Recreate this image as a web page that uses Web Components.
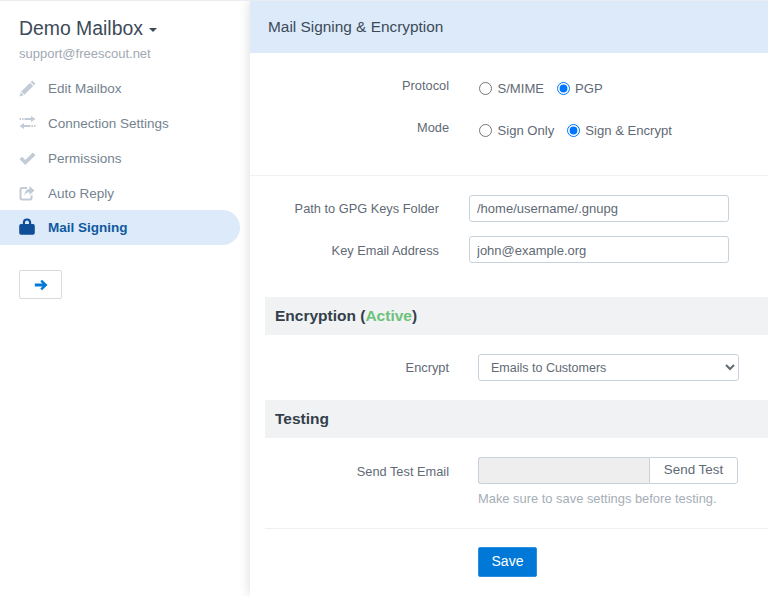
<!DOCTYPE html>
<html><head><meta charset="utf-8">
<style>
html,body{margin:0;padding:0;background:#fff}
body{width:768px;height:596px;overflow:hidden;font-family:"Liberation Sans",Arial,sans-serif;font-size:13px;color:#5f6a75}
</style></head><body>
<template id="t-shell"><style>
:host{display:flex;width:768px;height:596px;box-sizing:border-box;border-top:1px solid #eaecef;overflow:hidden}
::slotted([slot=side]){flex:0 0 250px}
::slotted([slot=main]){flex:1 1 auto;min-width:0}
</style><slot name="side"></slot><slot name="main"></slot></template>

<template id="t-side"><style>
:host{display:block;box-sizing:border-box;padding-top:14px}
.title{margin-left:19px;font-size:19.4px;line-height:26px;color:#3c4a58;display:flex;align-items:center;gap:6px}
.caret{width:0;height:0;border:4px solid transparent;border-top-color:#3c4a58;border-bottom:0;margin-top:3px}
.mail{margin:4px 0 0 19px;line-height:17px;font-size:13px;color:#a1a9b3}
nav{margin-top:9px;width:240px;display:flex;flex-direction:column}
.btn{margin:25px 0 0 19px;box-sizing:border-box;width:43px;height:29px;border:1px solid #d6dbe0;border-radius:2px;display:flex;align-items:center;justify-content:center;background:#fff}
</style>
<div class="title"><span>Demo Mailbox</span><i class="caret"></i></div>
<div class="mail">support@freescout.net</div>
<nav><slot></slot></nav>
<div class="btn"><svg width="14" height="12" viewBox="0 0 14 12"><path d="M8 .8 13.500 6 8 11.200 6.300 9.500 8.500 7.500H.8V4.500H8.500L6.300 2.500Z" fill="#0078d7"/></svg></div>
</template>

<template id="t-item"><style>
:host{display:flex;align-items:center;height:35px;box-sizing:border-box;padding-left:19px;border-radius:0 18px 18px 0;color:#75838f;font-size:13.5px}
:host([active]){background:#dceafa;color:#10599f;font-weight:700;margin-top:-1px}
.ic{flex:0 0 29px;display:flex;align-items:center}
::slotted(svg){display:block}
</style><span class="ic"><slot name="icon"></slot></span><span><slot></slot></span></template>

<template id="t-head"><style>
:host{display:flex;align-items:center;height:52px;background:#dceafa;padding-left:18px;font-size:15.4px;color:#3c4a58;box-sizing:border-box}
</style><slot></slot></template>

<template id="t-row"><style>
:host{display:flex;align-items:center}
.l{flex:0 0 var(--lw,199px);box-sizing:border-box;text-align:right;color:#5f6a75;font-size:12.8px;transform:translateY(var(--ly,0))}
.c{margin-left:var(--gap,30px);display:flex;align-items:center;flex:1 1 auto;min-width:0}
</style><div class="l"><slot name="label"></slot></div><div class="c"><slot></slot></div></template>

<template id="t-radio"><style>
:host{display:inline-flex;align-items:center;color:#5f6a75;margin-right:12.500px;font-size:13.1px}
input{margin:0 5.5px 0 0;width:13px;height:13px;flex:none}
</style><input type="radio"><slot></slot></template>

<template id="t-section"><style>
:host{display:flex;align-items:center;height:38px;background:#f1f2f4;padding-left:10px;font-size:15.5px;font-weight:700;color:#333f4b;box-sizing:border-box;margin-left:15px;white-space:pre}
</style><slot></slot></template>

<template id="t-main"><style>
:host{display:block;height:595px;background:#fff;box-shadow:0 0 11px rgba(60,70,80,.2);position:relative}
hr{border:0;border-top:1px solid #eef0f2;margin:0}
.radios{display:flex;flex-direction:column;padding-top:26px;height:122px;box-sizing:border-box}
.radios form-row{--lw:199px;--gap:30px;--ly:-3px;height:18px}
.radios form-row+form-row{margin-top:24px}
.paths{padding-top:19px;height:121px;box-sizing:border-box}
.paths form-row{--lw:189px;--gap:30px;height:27px}
.paths form-row+form-row{margin-top:14px;--ly:1px}
.paths form-row+form-row .txt{padding-top:2px}
.txt{width:260px;height:27px;box-sizing:border-box;border:1px solid #c8d2dc;border-radius:3px;padding:0 7px;font:13px "Liberation Sans",Arial,sans-serif;color:#5f6a75;background:#fff;outline:0}
.sel{width:261px;height:27px;box-sizing:border-box;border:1px solid #c8d2dc;border-radius:3px;padding:0 8px;font:12.5px "Liberation Sans",Arial,sans-serif;color:#5f6a75;background:#fff;outline:0}
.enc{height:65px;padding-top:19px;box-sizing:border-box}
.enc form-row,.test form-row{--lw:199px;--gap:29px}
.test{padding-top:19px;height:90px;box-sizing:border-box}
.test form-row{--ly:1px}
.grp{display:flex;width:260px;height:27px}
.grp i{flex:1;box-sizing:border-box;background:#eeeeee;border:1px solid #c8d2dc;border-right:0;border-radius:3px 0 0 3px}
.grp button{flex:0 0 89px;box-sizing:border-box;background:#fff;border:1px solid #c8d2dc;border-radius:0 3px 3px 0;font:13.4px "Liberation Sans",Arial,sans-serif;color:#5f6a75;padding:0 0 2px}
.hint{margin:7px 0 0 228px;line-height:15px;color:#a6aeb7;font-size:12.9px}
.line{margin-left:15px}
.act{padding:18px 0 0 228px}
.save{width:59px;height:30px;box-sizing:border-box;background:#0078d7;border:1px solid #2a8fe0;border-radius:2px;color:#fff;font:14px "Liberation Sans",Arial,sans-serif;padding:0 0 2px}
.on{color:#6cc27a}
</style>
<main-head>Mail Signing &amp; Encryption</main-head>
<div class="radios">
<form-row><span slot="label">Protocol</span><radio-opt>S/MIME</radio-opt><radio-opt checked>PGP</radio-opt></form-row>
<form-row><span slot="label">Mode</span><radio-opt>Sign Only</radio-opt><radio-opt checked>Sign &amp; Encrypt</radio-opt></form-row>
</div>
<hr>
<div class="paths">
<form-row><span slot="label">Path to GPG Keys Folder</span><input class="txt" value="/home/username/.gnupg"></form-row>
<form-row><span slot="label">Key Email Address</span><input class="txt" value="john@example.org"></form-row>
</div>
<section-head>Encryption (<span class="on">Active</span>)</section-head>
<div class="enc">
<form-row><span slot="label">Encrypt</span><select class="sel"><option>Emails to Customers</option></select></form-row>
</div>
<section-head>Testing</section-head>
<div class="test">
<form-row><span slot="label">Send Test Email</span><div class="grp"><i></i><button>Send Test</button></div></form-row>
<div class="hint">Make sure to save settings before testing.</div>
</div>
<hr class="line">
<div class="act"><button class="save">Save</button></div>
</template>

<app-shell>
<side-bar slot="side">
<nav-item><svg slot="icon" width="17" height="17" viewBox="0 0 17 17"><path d="M13.300.500 16.500 3.700 14.900 5.300 11.700 2.100ZM11 2.800 14.200 6 5.400 14.800 2.200 11.600ZM1.700 12.300 4.700 15.300.500 16.500Z" fill="#c2ccd6"/></svg>Edit Mailbox</nav-item>
<nav-item><svg slot="icon" width="17" height="13" viewBox="0 0 17 13" style="margin-top:-2px"><path d="M12 0 16.500 3 12 6V4H5.500V2H12ZM.5 2H2V4H.5ZM3 2H4.500V4H3ZM5 7V9H11.500V11H5V13L.5 10ZM15 9H16.500V11H15ZM12.500 9H14V11H12.500Z" fill="#c2ccd6"/></svg>Connection Settings</nav-item>
<nav-item><svg slot="icon" width="17" height="13" viewBox="0 0 17 13"><path d="M.5 7.300 3 4.800 6.300 8 13.800.5 16.500 3.200 6.300 13 .5 7.300Z" fill="#c2ccd6"/></svg>Permissions</nav-item>
<nav-item><svg slot="icon" width="16" height="15" viewBox="0 0 16 15" style="margin-top:-1px"><path d="M3 1H8V3H3.500Q2.500 3 2.500 4V11.500Q2.500 12.500 3.500 12.500H10.500Q11.500 12.500 11.500 11.500V10L13.500 8.500V12Q13.500 14.500 11 14.500H3Q.5 14.500.5 12V3.500Q.5 1 3 1Z" fill="#c2ccd6"/><path d="M10.500 0 15.500 4.500 10.500 9V6.300Q7 6.300 5.500 9.500 5.500 3.500 10.500 2.800Z" fill="#c2ccd6"/></svg>Auto Reply</nav-item>
<nav-item active><svg slot="icon" width="16" height="17" viewBox="0 0 16 17" style="margin-top:-3px"><path d="M3.800 6V4.800Q3.800.5 8 .5T12.200 4.800V6H14Q15.800 6 15.800 8V14.800Q15.800 16.800 14 16.800H2Q.2 16.800.2 14.800V8Q.2 6 2 6ZM6 6H10V4.800Q10 2.500 8 2.500T6 4.800Z" fill="#0f4f98" fill-rule="evenodd"/></svg>Mail Signing</nav-item>
</side-bar>
<main-panel slot="main"></main-panel>
</app-shell>
<script>
const mk=(name,tid,init)=>customElements.define(name,class extends HTMLElement{
  constructor(){super();this.attachShadow({mode:"open"}).appendChild(document.getElementById(tid).content.cloneNode(true));}
  connectedCallback(){init&&init(this);}
});
mk("form-row","t-row");
mk("radio-opt","t-radio",el=>{const i=el.shadowRoot.querySelector("input");i.checked=el.hasAttribute("checked");});
mk("main-head","t-head");
mk("section-head","t-section");
mk("nav-item","t-item");
mk("side-bar","t-side");
mk("app-shell","t-shell");
mk("main-panel","t-main");
</script>
</body></html>
